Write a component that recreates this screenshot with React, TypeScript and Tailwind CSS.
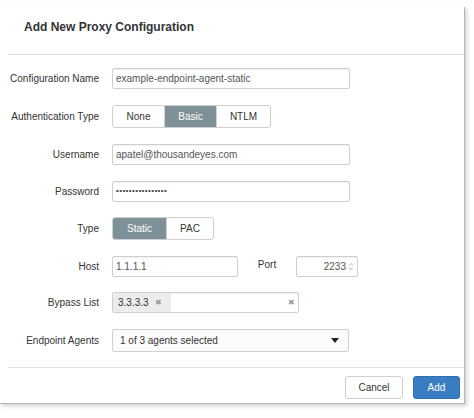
import React from 'react';

const font = { fontFamily: '"Liberation Sans", Arial, sans-serif' };

const Label: React.FC<{ children: React.ReactNode }> = ({ children }) => (
    <div className="w-[99px] shrink-0 text-right text-[10px] text-[#333]">{children}</div>
);

const Field: React.FC<{ className?: string; children?: React.ReactNode }> = ({ className = '', children }) => (
    <div className={`h-[21px] flex items-center px-[3px] border border-[#cfcfcf] rounded-[2px] bg-white text-[10px] text-[#555] shadow-[inset_0_1px_1px_rgba(0,0,0,0.06)] ${className}`}>
        {children}
    </div>
);

const Segmented: React.FC<{ options: string[]; active: string; widths: string[] }> = ({ options, active, widths }) => (
    <div className="flex h-[23px] border border-[#cfcfcf] rounded-[3px] overflow-hidden bg-white">
        {options.map((o, i) => (
            <div
                key={o}
                className={`flex items-center justify-center text-[10px] ${widths[i]} ${i > 0 ? 'border-l border-[#cfcfcf]' : ''} ${o === active ? 'bg-[#7e9098] text-white' : 'text-[#333]'}`}
            >
                {o}
            </div>
        ))}
    </div>
);

const Row: React.FC<{ className?: string; children: React.ReactNode }> = ({ className = '', children }) => (
    <div className={`flex items-center gap-[13px] ${className}`}>{children}</div>
);

export default function App() {
    return (
        <div className="w-[474px] h-[418px] bg-white" style={font}>
            <div className="w-[465px] mt-[7px] bg-white border-r border-b border-[#b5b5b5] shadow-[2px_2px_4px_rgba(0,0,0,0.18)]">
                {/* Header */}
                <div className="h-[47px] pl-[24px] pt-[13px]">
                    <h1 className="text-[12px] leading-[14px] font-bold text-[#333]">Add New Proxy Configuration</h1>
                </div>
                <div className="ml-2 h-px bg-[#e3e3e3]" />

                {/* Body */}
                <div className="pt-[4.5px] pb-[7.5px]">
                    <Row className="h-[38px]">
                        <Label>Configuration Name</Label>
                        <Field className="w-[238px]">example-endpoint-agent-static</Field>
                    </Row>
                    <Row className="h-[38px]">
                        <Label>Authentication Type</Label>
                        <Segmented options={['None', 'Basic', 'NTLM']} active="Basic" widths={['w-[51px]', 'w-[52px]', 'w-[54px]']} />
                    </Row>
                    <Row className="h-[37px]">
                        <Label>Username</Label>
                        <Field className="w-[238px]">apatel@thousandeyes.com</Field>
                    </Row>
                    <Row className="h-[37px]">
                        <Label>Password</Label>
                        <Field className="w-[238px]">
                            <span className="text-[8px] tracking-[0.4px] text-[#444]">••••••••••••••••</span>
                        </Field>
                    </Row>
                    <Row className="h-[38px]">
                        <Label>Type</Label>
                        <Segmented options={['Static', 'PAC']} active="Static" widths={['w-[53px]', 'w-[47px]']} />
                    </Row>
                    <Row className="h-[37px]">
                        <Label>Host</Label>
                        <Field className="w-[126px]">1.1.1.1</Field>
                        <div className="w-[32px] text-center text-[10px] text-[#333] -mt-[3px]">Port</div>
                        <Field className="w-[62px] justify-end gap-[2px]">
                            <span>2233</span>
                            <svg width="6" height="9" viewBox="0 0 6 9" className="text-[#999]">
                                <path d="M1 3.5 L3 1.5 L5 3.5" fill="none" stroke="currentColor" strokeWidth="0.8" />
                                <path d="M1 5.5 L3 7.5 L5 5.5" fill="none" stroke="currentColor" strokeWidth="0.8" />
                            </svg>
                        </Field>
                    </Row>
                    <Row className="h-[36px]">
                        <Label>Bypass List</Label>
                        <Field className="w-[187px] !px-0 justify-between">
                            <span className="h-full flex items-center gap-[6px] bg-[#ececec] pl-[5px] pr-[9px] text-[#333]">
                                3.3.3.3
                                <span className="text-[8px] text-[#999]">✖</span>
                            </span>
                            <span className="text-[8px] text-[#999] pr-[3px]">✖</span>
                        </Field>
                    </Row>
                    <Row className="h-[39px]">
                        <Label>Endpoint Agents</Label>
                        <div className="w-[237px] h-[23px] flex items-center justify-between pl-[7px] pr-[9px] border border-[#cfcfcf] rounded-[2px] bg-[#fbfbfb] text-[10px] text-[#333]">
                            <span>1 of 3 agents selected</span>
                            <svg width="8" height="5" viewBox="0 0 8 5">
                                <path d="M0 0 H8 L4 5 Z" fill="#222" />
                            </svg>
                        </div>
                    </Row>
                </div>

                {/* Footer */}
                <div className="ml-2 h-px bg-[#e3e3e3]" />
                <div className="flex justify-end gap-[10px] pt-[8px] pb-[4px] pr-[4px]">
                    <button className="w-[58px] h-[23px] border border-[#cfcfcf] rounded-[3px] bg-white text-[10px] text-[#333]">Cancel</button>
                    <button className="w-[47px] h-[23px] rounded-[3px] bg-[#3a7cc1] border border-[#3170b0] text-[10px] text-white">Add</button>
                </div>
            </div>
        </div>
    );
}
